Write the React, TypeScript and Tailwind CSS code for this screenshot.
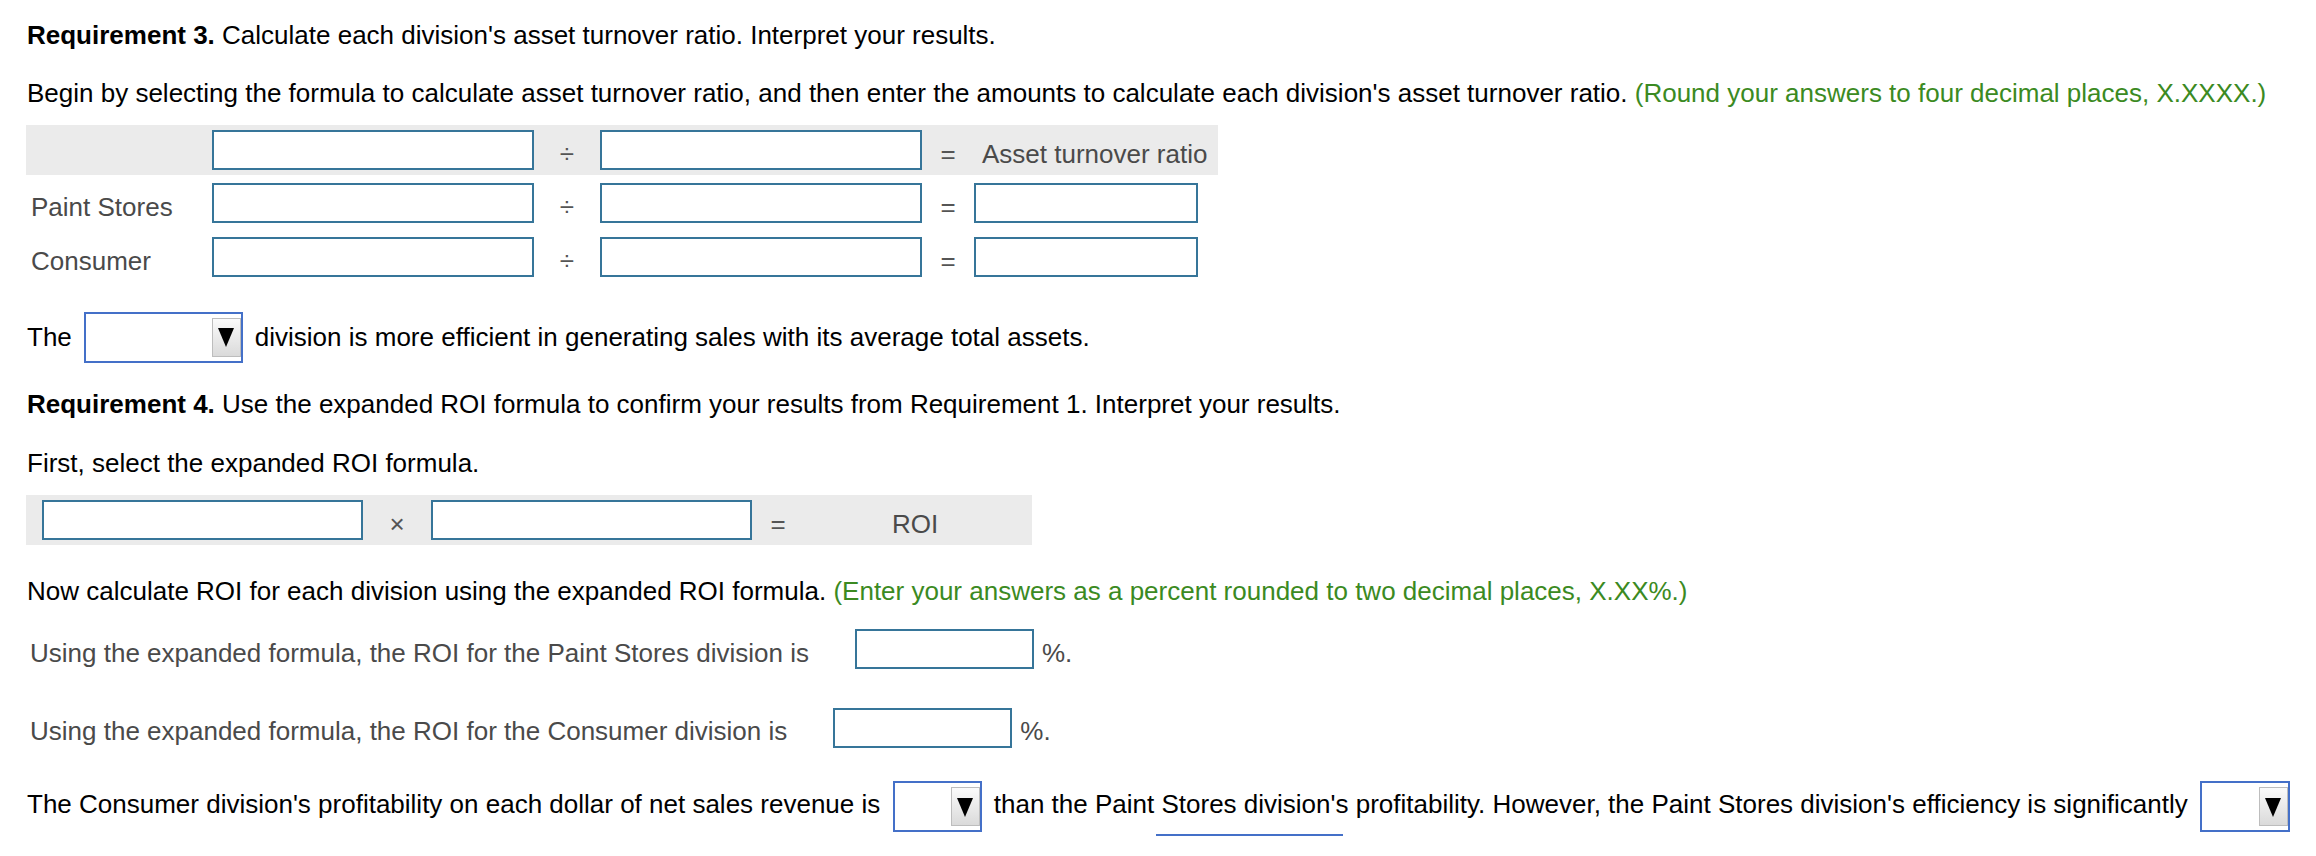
import React from 'react';

const font = { fontFamily: '"Liberation Sans", Arial, sans-serif' };

const Field = ({ w }: { w: string }) => (
  <div className={`${w} h-[40px] shrink-0 border-2 border-[#367599] bg-white`} />
);

const Dropdown = ({ w, inline }: { w: string; inline?: boolean }) => (
  <span
    className={`${w} ${
      inline ? 'inline-flex align-middle my-[1px]' : 'flex'
    } h-[51px] mx-[5px] shrink-0 items-center justify-end border-2 border-[#4470c8] bg-white`}
  >
    <span className="flex h-[39px] w-[29px] items-center justify-center border border-[#bdbdbd] bg-gradient-to-b from-[#fbfbfb] to-[#dadada]">
      <svg width="16" height="20" viewBox="0 0 16 20">
        <polygon points="0,1 16,1 8,20" fill="#000" />
      </svg>
    </span>
  </span>
);

const Sign = ({ c, w }: { c: string; w: string }) => (
  <div className={`${w} shrink-0 pt-[8px] text-center text-[#555]`}>{c}</div>
);

export default function App() {
  const rows = [
    { label: 'Paint Stores', h: 'h-[56px]' },
    { label: 'Consumer', h: 'h-[52px]' },
  ];

  return (
    <div className="h-[836px] overflow-hidden bg-white">
      <div className="pl-[27px] pt-[20px] text-[26px] leading-[30px] text-black" style={font}>
        {/* Requirement 3 */}
        <p>
          <span className="font-bold">Requirement 3.</span> Calculate each division's asset turnover ratio. Interpret your results.
        </p>
        <p className="mt-[28px]">
          Begin by selecting the formula to calculate asset turnover ratio, and then enter the amounts to calculate each division's asset turnover ratio.{' '}
          <span className="text-[#3b8a22]">(Round your answers to four decimal places, X.XXXX.)</span>
        </p>

        <div className="mt-[17px] -ml-px w-[1192px]">
          <div className="flex h-[50px] items-center bg-[#ebebeb]">
            <div className="w-[186px] shrink-0" />
            <Field w="w-[322px]" />
            <Sign c="÷" w="w-[66px]" />
            <Field w="w-[322px]" />
            <Sign c="=" w="w-[52px]" />
            <div className="pl-[8px] pt-[8px] text-[#4a4a4a]">Asset turnover ratio</div>
          </div>
          {rows.map(r => (
            <div key={r.label} className={`flex ${r.h} items-center`}>
              <div className="w-[186px] shrink-0 pl-[5px] pt-[8px] text-[#4a4a4a]">{r.label}</div>
              <Field w="w-[322px]" />
              <Sign c="÷" w="w-[66px]" />
              <Field w="w-[322px]" />
              <Sign c="=" w="w-[52px]" />
              <Field w="w-[224px]" />
            </div>
          ))}
        </div>

        <div className="mt-[29px] flex h-[50px] items-center">
          <span>The</span>
          <span className="w-[7px]" />
          <Dropdown w="w-[159px]" />
          <span className="w-[7px]" />
          <span>division is more efficient in generating sales with its average total assets.</span>
        </div>

        {/* Requirement 4 */}
        <p className="mt-[27px]">
          <span className="font-bold">Requirement 4.</span> Use the expanded ROI formula to confirm your results from Requirement 1. Interpret your results.
        </p>
        <p className="mt-[29px]">First, select the expanded ROI formula.</p>

        <div className="mt-[17px] -ml-px flex h-[50px] w-[1006px] items-center bg-[#ebebeb] pl-[16px]">
          <Field w="w-[321px]" />
          <Sign c="×" w="w-[68px]" />
          <Field w="w-[321px]" />
          <Sign c="=" w="w-[52px]" />
          <div className="flex-1 pr-[6px] pt-[8px] text-center text-[#4a4a4a]">ROI</div>
        </div>

        <p className="mt-[31px]">
          Now calculate ROI for each division using the expanded ROI formula.{' '}
          <span className="text-[#3b8a22]">(Enter your answers as a percent rounded to two decimal places, X.XX%.)</span>
        </p>

        <div className="mt-[23px] flex items-start text-[#4a4a4a]">
          <span className="mt-[9px] pl-[3px]">Using the expanded formula, the ROI for the Paint Stores division is</span>
          <span className="w-[46px] shrink-0" />
          <Field w="w-[179px]" />
          <span className="mt-[9px] pl-[8px]">%.</span>
        </div>
        <div className="mt-[39px] flex items-start text-[#4a4a4a]">
          <span className="mt-[8px] pl-[3px]">Using the expanded formula, the ROI for the Consumer division is</span>
          <span className="w-[46px] shrink-0" />
          <Field w="w-[179px]" />
          <span className="mt-[8px] pl-[8px]">%.</span>
        </div>

        <p className="mt-[32px]">
          The Consumer division's profitability on each dollar of net sales revenue is{' '}
          <Dropdown w="w-[89px]" inline />{' '}
          than the Paint Stores division's profitability. However, the Paint Stores division's efficiency is significantly{' '}
          <Dropdown w="w-[90px]" inline />{' '}
          than the Consumer division's efficiency. Therefore, the overall returns on investment (ROI) for the{' '}
          <Dropdown w="w-[187px]" inline />{' '}
          division is higher.
        </p>
      </div>
    </div>
  );
}
